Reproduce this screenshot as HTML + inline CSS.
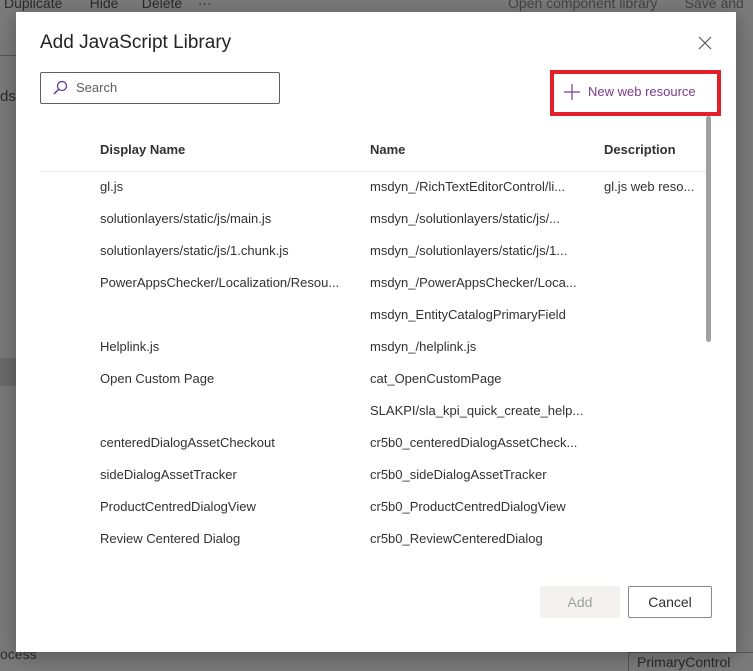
<!DOCTYPE html>
<html><head><meta charset="utf-8"><style>
body{margin:0;width:753px;height:670px;overflow:hidden;background:#7b7b7b;font-family:"Liberation Sans",sans-serif;position:relative;color:#323130}
.a{position:absolute;white-space:nowrap}
.bg{color:#2a2a2a;font-size:14px}
.dlg{position:absolute;left:16px;top:12px;width:720px;height:640px;background:#fff;box-shadow:0 4px 20px rgba(0,0,0,.3)}
.t{font-size:13px;color:#323130}
</style></head><body>
<div class="a bg" style="left:4px;top:-5px">Duplicate &nbsp;&nbsp;&nbsp;&nbsp;&nbsp;&nbsp;Hide &nbsp;&nbsp;&nbsp;&nbsp;&nbsp;Delete &nbsp;&nbsp;&nbsp;···</div>
<div class="a bg" style="left:508px;top:-5px;color:#444">Open component library &nbsp;&nbsp;&nbsp;&nbsp;&nbsp;&nbsp;Save and</div>
<div class="a" style="left:0;top:55px;width:16px;height:1px;background:#555"></div>
<div class="a" style="left:0;top:358px;width:16px;height:28px;background:#6a6a6a"></div>
<div class="a bg" style="left:0;top:88px;font-size:15px">ds</div>
<div class="a bg" style="left:0;top:646px">ocess</div>
<div class="a" style="left:628px;top:652px;width:125px;height:18px;border-left:1px solid #555;border-top:1px solid #555"></div>
<div class="a bg" style="left:637px;top:654px">PrimaryControl</div>
<div class="dlg">
<div class="a" style="left:24px;top:20px;font-size:19px;color:#252423">Add JavaScript Library</div>
<svg class="a" style="left:682px;top:24px" width="14" height="14"><path d="M1 1L13 13M13 1L1 13" stroke="#555" stroke-width="1.2"/></svg>
<div class="a" style="left:24px;top:60px;width:238px;height:30px;border:1px solid #605e5c;border-radius:2px"></div>
<svg class="a" style="left:36px;top:68px" width="16" height="16"><circle cx="10" cy="6" r="4.5" fill="none" stroke="#5c2e91" stroke-width="1.2"/><path d="M7 9L2 14" stroke="#5c2e91" stroke-width="1.3"/></svg>
<div class="a t" style="left:60px;top:68px;color:#605e5c">Search</div>
<div class="a" style="left:534px;top:58px;width:163px;height:38px;border:4px solid #e3202a"></div>
<svg class="a" style="left:548px;top:72px" width="16" height="16"><path d="M8 0V16M0 8H16" stroke="#7a3b8f" stroke-width="1.2"/></svg>
<div class="a t" style="left:572px;top:72px;color:#7a3b8f">New web resource</div>
<div class="a" style="left:690px;top:104px;width:5px;height:226px;background:#a0a0a0;border-radius:3px"></div>
<div class="a t" style="left:84px;top:130px;font-weight:bold">Display Name</div>
<div class="a t" style="left:354px;top:130px;font-weight:bold">Name</div>
<div class="a t" style="left:588px;top:130px;font-weight:bold">Description</div>
<div class="a" style="left:24px;top:159px;width:666px;height:1px;background:#edebe9"></div>
<div class="a t" style="left:84px;top:159px;line-height:32px">gl.js<br>solutionlayers/static/js/main.js<br>solutionlayers/static/js/1.chunk.js<br>PowerAppsChecker/Localization/Resou...<br>&nbsp;<br>Helplink.js<br>Open Custom Page<br>&nbsp;<br>centeredDialogAssetCheckout<br>sideDialogAssetTracker<br>ProductCentredDialogView<br>Review Centered Dialog</div>
<div class="a t" style="left:354px;top:159px;line-height:32px">msdyn_/RichTextEditorControl/li...<br>msdyn_/solutionlayers/static/js/...<br>msdyn_/solutionlayers/static/js/1...<br>msdyn_/PowerAppsChecker/Loca...<br>msdyn_EntityCatalogPrimaryField<br>msdyn_/helplink.js<br>cat_OpenCustomPage<br>SLAKPI/sla_kpi_quick_create_help...<br>cr5b0_centeredDialogAssetCheck...<br>cr5b0_sideDialogAssetTracker<br>cr5b0_ProductCentredDialogView<br>cr5b0_ReviewCenteredDialog</div>
<div class="a t" style="left:588px;top:159px;line-height:32px">gl.js web reso...</div>
<div class="a" style="left:524px;top:574px;width:80px;height:32px;background:#f3f2f1;border-radius:2px;color:#a19f9d;font-size:14px;text-align:center;line-height:32px">Add</div>
<div class="a" style="left:612px;top:574px;width:82px;height:30px;border:1px solid #8a8886;border-radius:2px;font-size:14px;text-align:center;line-height:30px">Cancel</div>
</div>
</body></html>
